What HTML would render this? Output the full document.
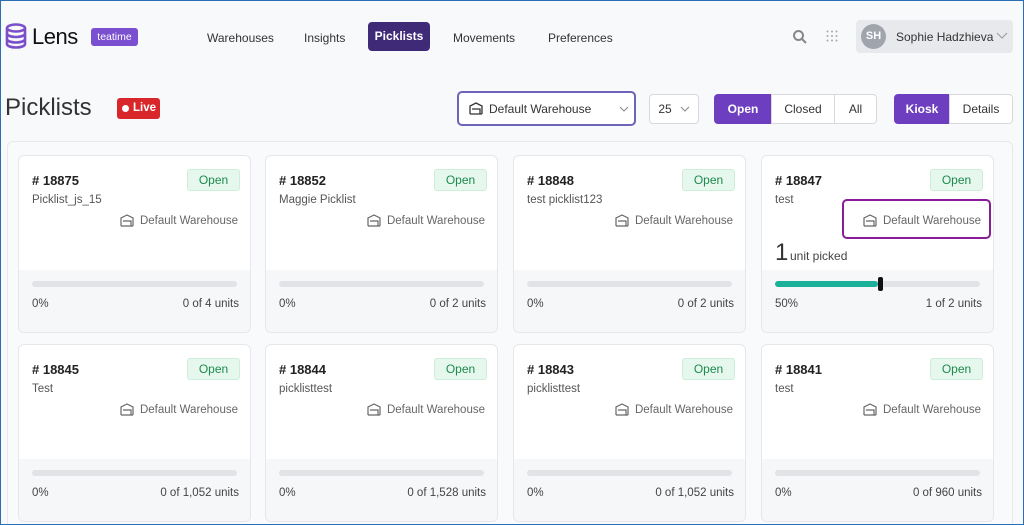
<!DOCTYPE html>
<html><head><meta charset="utf-8"><style>
*{box-sizing:border-box;margin:0;padding:0}
html,body{width:1024px;height:525px;overflow:hidden}
body{background:#f8f9fb;font-family:"Liberation Sans",sans-serif;color:#222;position:relative}
.abs{position:absolute}
.nav a{position:absolute;top:30px;font-size:12px;color:#333;line-height:16px}
.btn{position:absolute;border:1px solid #d8d8de;background:#fff;font-size:12px;color:#333;display:flex;align-items:center;justify-content:center}
.card{position:absolute;width:233px;height:178px;background:#fff;border:1px solid #e6e7eb;border-radius:6px;overflow:hidden}
.card .id{position:absolute;left:13px;top:17px;font-weight:bold;font-size:13px}
.card .nm{position:absolute;left:13px;top:38px;font-size:11.5px;color:#555}
.card .open{position:absolute;right:10px;top:13px;width:53px;height:22px;background:#e6f7ee;border:1px solid #cdeedb;border-radius:3px;color:#1e8a4c;font-size:12px;text-align:center;line-height:20px}
.card .wh{position:absolute;right:12px;top:58px;font-size:11.5px;color:#666;display:flex;align-items:center;gap:6px}
.card .bot{position:absolute;left:0;right:0;bottom:0;height:62px;background:#f6f7f9}
.card .bar{position:absolute;left:13px;right:13px;top:11px;height:6px;background:#e2e3e6;border-radius:3px}
.card .pl{position:absolute;left:13px;top:28px;font-size:11.5px;color:#444}
.card .pr{position:absolute;right:11px;top:28px;font-size:11.5px;color:#444}
</style></head><body>
<svg class="abs" style="left:4px;top:23px" width="24" height="26" viewBox="0 0 24 26" fill="none" stroke="#7b4fc9" stroke-width="2.6"><ellipse cx="12" cy="5" rx="9" ry="3.5"/><path d="M3 5v16c0 2 4 3.5 9 3.5s9-1.5 9-3.5V5"/><path d="M3 10.5c0 2 4 3.5 9 3.5s9-1.5 9-3.5M3 16c0 2 4 3.5 9 3.5s9-1.5 9-3.5"/></svg>
<div class="abs" style="left:32px;top:24px;font-size:22px;color:#111;letter-spacing:-0.5px">Lens</div>
<div class="abs" style="left:91px;top:28px;width:47px;height:18px;background:#7a4fd0;border-radius:3px;color:#fff;font-size:10.5px;text-align:center;line-height:18px">teatime</div>
<div class="nav">
<a style="left:207px">Warehouses</a><a style="left:304px">Insights</a>
<div class="abs" style="left:368px;top:22px;width:62px;height:29px;background:#3f2a78;border-radius:4px;color:#fff;font-size:12px;font-weight:bold;text-align:center;line-height:29px">Picklists</div>
<a style="left:453px">Movements</a><a style="left:548px">Preferences</a></div>
<svg class="abs" style="left:792px;top:29px" width="16" height="16" viewBox="0 0 16 16" fill="none" stroke="#888" stroke-width="2"><circle cx="6.5" cy="6.5" r="4.5"/><path d="M10 10l4 4"/></svg>
<svg class="abs" style="left:826px;top:30px" width="12" height="12" fill="#aaa"><circle cx="1.5" cy="1.5" r="1"/><circle cx="6" cy="1.5" r="1"/><circle cx="10.5" cy="1.5" r="1"/><circle cx="1.5" cy="6" r="1"/><circle cx="6" cy="6" r="1"/><circle cx="10.5" cy="6" r="1"/><circle cx="1.5" cy="10.5" r="1"/><circle cx="6" cy="10.5" r="1"/><circle cx="10.5" cy="10.5" r="1"/></svg>
<div class="abs" style="left:856px;top:20px;width:157px;height:33px;background:#e8e9ec;border-radius:4px"></div>
<div class="abs" style="left:861px;top:24px;width:25px;height:25px;border-radius:50%;background:#a0a4ad;color:#fff;font-size:11px;font-weight:bold;text-align:center;line-height:25px">SH</div>
<div class="abs" style="left:896px;top:30px;font-size:12px;color:#333">Sophie Hadzhieva</div>
<svg class="abs" style="left:996px;top:32px" width="12" height="8" fill="none" stroke="#999"><path d="M1 1l5 5 5-5"/></svg>
<div class="abs" style="left:5px;top:94px;font-size:24px;color:#333">Picklists</div>
<div class="abs" style="left:117px;top:98px;width:43px;height:21px;background:#d9262b;border-radius:3px;color:#fff;font-size:11.5px;font-weight:bold;line-height:21px;padding-left:16px">Live</div>
<div class="abs" style="left:122px;top:105px;width:7px;height:7px;border-radius:50%;background:#fff"></div>
<div class="btn" style="left:457px;top:91px;width:179px;height:35px;border:2px solid #6d63b8;border-radius:5px;justify-content:flex-start;padding-left:10px;gap:6px">
<svg width="14" height="13" fill="none" stroke="#333" stroke-width="1.3"><path d="M1 12V4l6-3 6 3v8M1 12h12M3 7h8v5"/></svg>Default Warehouse<svg style="margin-left:22px" width="10" height="6" fill="none" stroke="#888"><path d="M1 1l4 4 4-4"/></svg></div>
<div class="btn" style="left:649px;top:94px;width:50px;height:30px;border-radius:4px;gap:8px">25<svg width="10" height="6" fill="none" stroke="#888"><path d="M1 1l4 4 4-4"/></svg></div>
<div class="btn" style="left:714px;top:94px;width:58px;height:30px;background:#6d3fc0;border-color:#6d3fc0;color:#fff;font-weight:bold;border-radius:4px 0 0 4px">Open</div>
<div class="btn" style="left:771px;top:94px;width:64px;height:30px">Closed</div>
<div class="btn" style="left:834px;top:94px;width:43px;height:30px;border-radius:0 4px 4px 0">All</div>
<div class="btn" style="left:894px;top:94px;width:56px;height:30px;background:#6d3fc0;border-color:#6d3fc0;color:#fff;font-weight:bold;border-radius:4px 0 0 4px">Kiosk</div>
<div class="btn" style="left:949px;top:94px;width:64px;height:30px;border-radius:0 4px 4px 0">Details</div>
<div class="abs" style="left:7px;top:141px;width:1006px;height:390px;border:1px solid #e8e9ee;border-radius:6px;background:#f9fafb"></div>

<div id="cards"></div>
<script>
var d=[["18875","Picklist_js_15","0 of 4 units"],["18852","Maggie Picklist","0 of 2 units"],["18848","test picklist123","0 of 2 units"],["18847","test","1 of 2 units"],["18845","Test","0 of 1,052 units"],["18844","picklisttest","0 of 1,528 units"],["18843","picklisttest","0 of 1,052 units"],["18841","test","0 of 960 units"]];
var xs=[18,265,513,761],ys=[155,344],h="";
var ic='<svg width="14" height="13" fill="none" stroke="#666" stroke-width="1.2"><path d="M1 12V4l6-3 6 3v8M1 12h12M3 7h8v5"/></svg>';
d.forEach(function(c,i){var x=xs[i%4],y=ys[i>>2],sp=i==3;
h+='<div class="card" style="left:'+x+'px;top:'+y+'px"><div class="id"># '+c[0]+'</div><div class="nm">'+c[1]+'</div><div class="open">Open</div><div class="wh">'+ic+'Default Warehouse</div>'+
(sp?'<div style="position:absolute;left:13px;top:83px;font-size:24px;color:#333">1</div><div style="position:absolute;left:28px;top:93px;font-size:12px;color:#444">unit picked</div>':'')+
'<div class="bot"><div class="bar">'+(sp?'<div style="width:50%;height:6px;background:#1bb09a;border-radius:3px"></div><div style="position:absolute;left:50%;top:-4px;width:5px;height:14px;background:#111;border-radius:2px"></div>':'')+'</div><div class="pl">'+(sp?'50%':'0%')+'</div><div class="pr">'+c[2]+'</div></div></div>';});
document.getElementById('cards').innerHTML=h;
</script>
<div class="abs" style="left:842px;top:199px;width:149px;height:40px;border:2px solid #8a1c9a;border-radius:5px"></div>
<div class="abs" style="left:0;top:0;width:1024px;height:525px;border:1px solid #2a6fb3;pointer-events:none"></div>
</body></html>
